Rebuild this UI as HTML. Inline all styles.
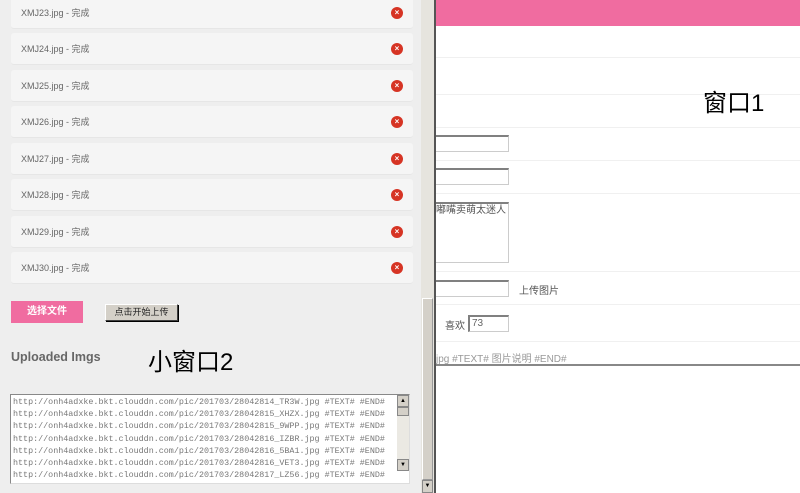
<!DOCTYPE html>
<html><head><meta charset="utf-8"><style>
*{margin:0;padding:0;box-sizing:border-box}
body{width:800px;height:493px;overflow:hidden;position:relative;background:#fff;font-family:"Liberation Sans","Noto Sans CJK SC",sans-serif}
.abs{position:absolute}
#left{left:0;top:0;width:421px;height:493px;background:#eeeeee}
.row{position:absolute;left:11px;width:402px;height:32px;background:#f5f5f5;border-radius:3px;border-bottom:1px solid #e6e6e6}
.row span{position:absolute;left:10px;top:9px;font-size:9px;color:#666}
.x{position:absolute;left:380px;top:10px;width:12px;height:12px;border-radius:50%;background:#d63424;color:#fff;font-size:8px;line-height:12px;text-align:center;font-weight:bold}
.line{position:absolute;left:436px;width:364px;height:1px;background:#f0f0f0}
.inp{position:absolute;left:436px;width:73px;height:17px;border:1px solid #ccc;border-top:2px solid #808080;border-left:none;background:#fff}
</style></head><body>
<div id="left" class="abs">
<div class="row" style="top:-3px"><span>XMJ23.jpg - 完成</span><div class="x">×</div></div>
<div class="row" style="top:33px"><span>XMJ24.jpg - 完成</span><div class="x">×</div></div>
<div class="row" style="top:70px"><span>XMJ25.jpg - 完成</span><div class="x">×</div></div>
<div class="row" style="top:106px"><span>XMJ26.jpg - 完成</span><div class="x">×</div></div>
<div class="row" style="top:143px"><span>XMJ27.jpg - 完成</span><div class="x">×</div></div>
<div class="row" style="top:179px"><span>XMJ28.jpg - 完成</span><div class="x">×</div></div>
<div class="row" style="top:216px"><span>XMJ29.jpg - 完成</span><div class="x">×</div></div>
<div class="row" style="top:252px"><span>XMJ30.jpg - 完成</span><div class="x">×</div></div>
<div class="abs" style="left:11px;top:301px;width:72px;height:22px;background:#f06ca0;color:#fff;font-size:10px;font-weight:bold;text-align:center;line-height:22px">选择文件</div>
<div class="abs" style="left:105px;top:304px;width:73px;height:17px;background:#d4d0c8;border:1px solid #404040;border-top-color:#fff;border-left-color:#fff;box-shadow:1px 1px 0 #000;font-size:9px;text-align:center;line-height:15px;color:#222">点击开始上传</div>
<div class="abs" style="left:11px;top:350px;font-size:12.5px;font-weight:bold;color:#666">Uploaded Imgs</div>
<div class="abs" style="left:148px;top:342px;font-size:24px;color:#000">小窗口2</div>
<div class="abs" style="left:10px;top:394px;width:400px;height:90px;background:#fff;border:1px solid #888;border-bottom-color:#ddd;border-right-color:#ddd;font-family:'Liberation Mono','Noto Sans CJK SC',monospace;font-size:8.4px;color:#777;line-height:12.2px;padding:1px 2px;overflow:hidden;white-space:pre">http://onh4adxke.bkt.clouddn.com/pic/201703/28042814_TR3W.jpg #TEXT# #END#
http://onh4adxke.bkt.clouddn.com/pic/201703/28042815_XHZX.jpg #TEXT# #END#
http://onh4adxke.bkt.clouddn.com/pic/201703/28042815_9WPP.jpg #TEXT# #END#
http://onh4adxke.bkt.clouddn.com/pic/201703/28042816_IZBR.jpg #TEXT# #END#
http://onh4adxke.bkt.clouddn.com/pic/201703/28042816_5BA1.jpg #TEXT# #END#
http://onh4adxke.bkt.clouddn.com/pic/201703/28042816_VET3.jpg #TEXT# #END#
http://onh4adxke.bkt.clouddn.com/pic/201703/28042817_LZ56.jpg #TEXT# #END#</div>
<div class="abs" style="left:397px;top:395px;width:12px;height:76px;background:#ebe9e3"></div>
<div class="abs" style="left:397px;top:395px;width:12px;height:12px;background:#d4d0c8;border:1px solid #888;font-size:6px;text-align:center;line-height:10px">▲</div>
<div class="abs" style="left:397px;top:407px;width:12px;height:9px;background:#d4d0c8;border:1px solid #888"></div>
<div class="abs" style="left:397px;top:459px;width:12px;height:12px;background:#d4d0c8;border:1px solid #888;font-size:6px;text-align:center;line-height:10px">▼</div>
</div>
<div class="abs" style="left:421px;top:0;width:13px;height:493px;background:#e6e4de"></div>
<div class="abs" style="left:422px;top:298px;width:11px;height:182px;background:#d4d0c8;border:1px solid #999;border-top-color:#fff;border-left-color:#fff"></div>
<div class="abs" style="left:422px;top:480px;width:11px;height:13px;background:#d4d0c8;border:1px solid #888;font-size:6px;text-align:center;line-height:11px">▼</div>
<div class="abs" style="left:434px;top:0;width:2px;height:493px;background:#555"></div>
<div class="abs" style="left:436px;top:0;width:364px;height:26px;background:#f06ca0"></div>
<div class="line" style="top:57px"></div><div class="line" style="top:94px"></div><div class="line" style="top:127px"></div><div class="line" style="top:160px"></div><div class="line" style="top:193px"></div><div class="line" style="top:271px"></div><div class="line" style="top:304px"></div><div class="line" style="top:341px"></div>
<div class="abs" style="left:703px;top:83px;font-size:24px;color:#000">窗口1</div>
<div class="inp" style="top:135px"></div>
<div class="inp" style="top:168px"></div>
<div class="inp" style="top:202px;height:61px;font-size:10px;color:#555;padding-left:0;line-height:14px">嘟嘴卖萌太迷人</div>
<div class="inp" style="top:280px"></div>
<div class="abs" style="left:519px;top:282px;font-size:10px;color:#555">上传图片</div>
<div class="abs" style="left:445px;top:317px;font-size:10px;color:#555">喜欢</div>
<div class="abs" style="left:468px;top:315px;width:41px;height:17px;border:1px solid #ccc;border-top:2px solid #808080;border-left:2px solid #808080;font-size:10px;color:#666;padding-left:2px;line-height:13px">73</div>
<div class="abs" style="left:436px;top:350px;font-size:10px;color:#999;white-space:nowrap">jpg #TEXT# 图片说明 #END#</div>
<div class="abs" style="left:436px;top:364px;width:364px;height:2px;background:#888"></div>
</body></html>
